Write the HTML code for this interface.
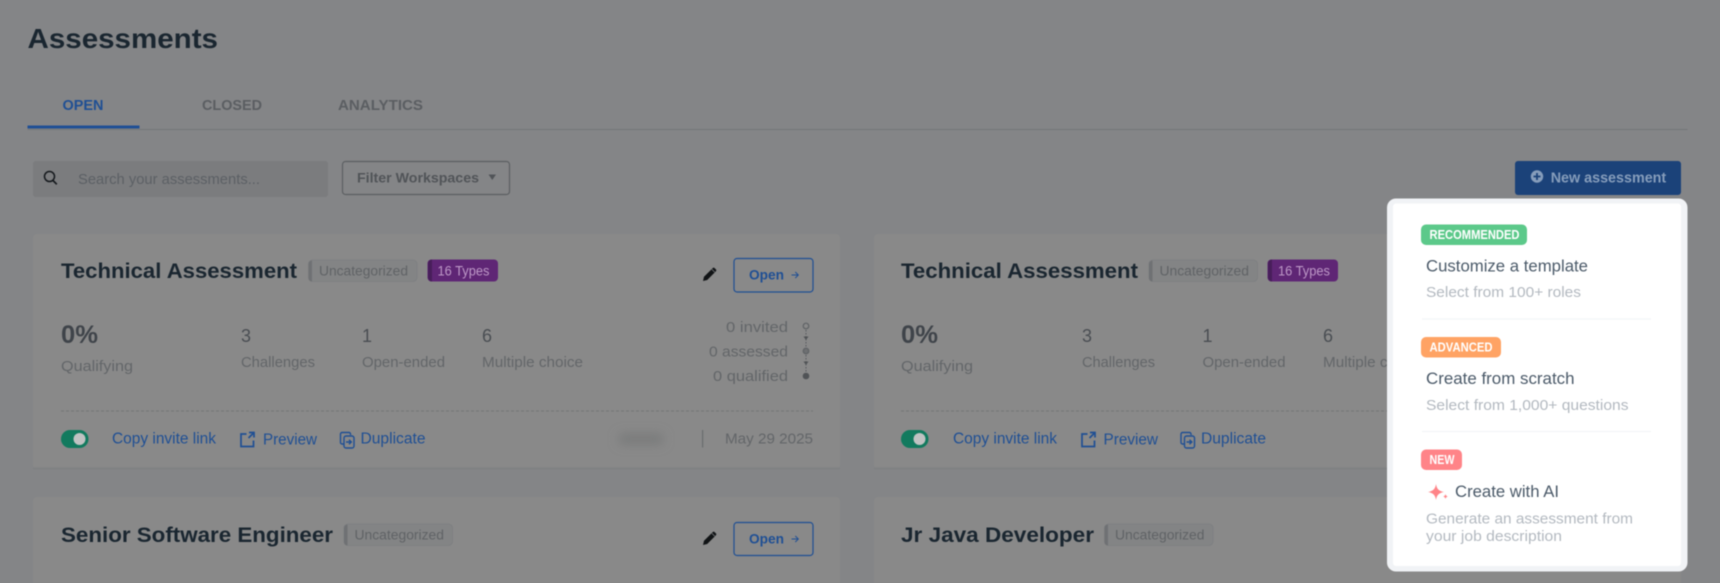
<!DOCTYPE html>
<html lang="en">
<head>
<meta charset="utf-8">
<title>Assessments</title>
<style>
html,body{margin:0;padding:0;width:1720px;height:583px;overflow:hidden;background:#848587}
svg{display:block;filter:blur(.45px)}
text{font-family:"Liberation Sans",sans-serif;white-space:pre}
.b{font-weight:700}
.d{fill:#1a2630}
.lab{fill:#636669;font-size:15px}
.num{fill:#4a4e53;font-size:18px}
.lnk{fill:#1f4f94;font-size:15.500px}
.tag{fill:#606366;font-size:13.500px}
.ty{fill:#bd98c7;font-size:13.500px}
.t1{fill:#4b5a69;font-size:17px}
.t2{fill:#b3b9c0;font-size:15px}
.w{fill:#fff;font-size:12.500px;font-weight:700}
</style>
</head>
<body>
<svg width="1720" height="583" viewBox="0 0 1720 583" xmlns="http://www.w3.org/2000/svg">
<defs>
<filter id="bl" x="-40%" y="-150%" width="180%" height="400%"><feGaussianBlur stdDeviation="5"/></filter>
<g id="ic"><path d="M6.500 2.500H1v12.500h12.500V9M9 1h5v5M13.800 1.200L8.500 6.500" fill="none" stroke="#1f4f94" stroke-width="1.700"/></g>
<g id="dup" fill="none" stroke="#1f4f94" stroke-width="1.400"><path d="M4 13H2.500a1.500 1.500 0 0 1-1.500-1.500V3a1.500 1.500 0 0 1 1.500-1.500H9.500A1.500 1.500 0 0 1 11 3V4"/><rect x="4.500" y="5" width="10" height="12" rx="2"/><path d="M6.500 11h5M9.500 8.800l2.300 2.200-2.300 2.200"/></g>
<g id="pen"><path d="M0 14l1-4.200L9.600 1.200a1.500 1.500 0 0 1 2.100 0l1.100 1.100a1.500 1.500 0 0 1 0 2.100L4.200 13z" fill="#111416"/><path d="M8.800 2.300l3 3" stroke="#848587" stroke-width=".7"/></g>
<g id="arr"><path d="M0 4h6.500M3.800 1l3 3-3 3" fill="none" stroke="#1f4f94" stroke-width="1"/></g>
</defs>

<rect width="1720" height="583" fill="#848587"/>

<text x="27.500" y="48" textLength="190.500" lengthAdjust="spacingAndGlyphs" class="b d" font-size="28">Assessments</text>
<text x="62.500" y="110" textLength="41" lengthAdjust="spacingAndGlyphs" class="b" font-size="14.500" fill="#1f4f94">OPEN</text>
<text x="202" y="110" textLength="60" lengthAdjust="spacingAndGlyphs" class="b" font-size="14.500" fill="#5b5e62">CLOSED</text>
<text x="338" y="110" textLength="85" lengthAdjust="spacingAndGlyphs" class="b" font-size="14.500" fill="#5b5e62">ANALYTICS</text>
<rect x="27.500" y="129" width="1660" height="1" fill="#737578"/>
<rect x="27.500" y="125.500" width="112" height="3" fill="#1f4f94"/>

<rect x="33" y="161" width="295" height="36" rx="3" fill="#7b7c7e"/>
<circle cx="49.500" cy="176.500" r="5" fill="none" stroke="#15191d" stroke-width="1.500"/>
<path d="M53 180.500l3.800 3.800" stroke="#15191d" stroke-width="1.700"/>
<text x="78" y="184" textLength="182" lengthAdjust="spacingAndGlyphs" font-size="14.500" fill="#5c6065">Search your assessments...</text>

<rect x="342.500" y="161.500" width="167" height="33" rx="3" fill="none" stroke="#5c5f62" stroke-width="1.200"/>
<text x="357" y="182.500" textLength="122" lengthAdjust="spacingAndGlyphs" class="b" font-size="14" fill="#515458">Filter Workspaces</text>
<path d="M488.500 174.500h7.500l-3.750 5.500z" fill="#515458"/>

<rect x="1515" y="161" width="166" height="34" rx="3" fill="#1b4279"/>
<circle cx="1537" cy="176.500" r="6.200" fill="#869dbb"/>
<path d="M1537 173v7M1533.500 176.500h7" stroke="#1b4279" stroke-width="1.800"/>
<text x="1550.700" y="182.500" textLength="115.500" lengthAdjust="spacingAndGlyphs" class="b" font-size="14.500" fill="#869dbb">New assessment</text>

<!-- card 1 -->
<rect x="33" y="234" width="807" height="235" rx="4" fill="#898989"/>
<rect x="33" y="467.500" width="807" height="2" rx="1" fill="#7f8183"/>
<rect x="33" y="497" width="807" height="90" rx="4" fill="#898989"/>

<text x="61" y="278" textLength="236" lengthAdjust="spacingAndGlyphs" class="b d" font-size="21">Technical Assessment</text>
<rect x="308.500" y="260" width="108.500" height="21.500" rx="4" fill="#838485" stroke="#7d7f81" stroke-width=".8"/>
<path d="M312 260.500a3.500 3.500 0 0 0-3.500 3.500v14a3.500 3.500 0 0 0 3.500 3.500z" fill="#6f7174"/>
<text x="319" y="275.500" textLength="89" lengthAdjust="spacingAndGlyphs" class="tag">Uncategorized</text>
<rect x="427.500" y="259.500" width="70.500" height="22" rx="4" fill="#5f2675"/>
<path d="M432 259.500a4 4 0 0 0-4 4v14a4 4 0 0 0 4 4z" fill="#481e5b"/>
<text x="437.500" y="275.500" textLength="52" lengthAdjust="spacingAndGlyphs" class="ty">16 Types</text>

<use href="#pen" x="703" y="267"/>
<rect x="734" y="258.500" width="79" height="33.500" rx="3" fill="none" stroke="#1f4f94" stroke-width="1.200"/>
<text x="749" y="279.500" textLength="35" lengthAdjust="spacingAndGlyphs" class="b" font-size="14" fill="#1f4f94">Open</text>
<use href="#arr" x="791.500" y="271"/>

<text x="61" y="343" textLength="37" lengthAdjust="spacingAndGlyphs" class="b" font-size="25" fill="#3f444a">0%</text>
<text x="61" y="371" textLength="72" lengthAdjust="spacingAndGlyphs" class="lab">Qualifying</text>
<text x="241" y="342" class="num">3</text>
<text x="241" y="367" textLength="74" lengthAdjust="spacingAndGlyphs" class="lab">Challenges</text>
<text x="362" y="342" class="num">1</text>
<text x="362" y="367" textLength="83" lengthAdjust="spacingAndGlyphs" class="lab">Open-ended</text>
<text x="482" y="342" class="num">6</text>
<text x="482" y="367" textLength="101" lengthAdjust="spacingAndGlyphs" class="lab">Multiple choice</text>

<text x="726" y="332" textLength="62" lengthAdjust="spacingAndGlyphs" class="lab">0 invited</text>
<text x="709" y="356.500" textLength="79" lengthAdjust="spacingAndGlyphs" class="lab">0 assessed</text>
<text x="713" y="381" textLength="75" lengthAdjust="spacingAndGlyphs" class="lab">0 qualified</text>
<path d="M806 330v18M806 355v18" stroke="#55585c" stroke-width="1" stroke-dasharray="1.500 1.500"/>
<path d="M803.500 336.500h5l-2.500 3.500zM803.500 361.500h5l-2.500 3.500z" fill="#505356"/>
<circle cx="806" cy="326" r="2.800" fill="#898989" stroke="#5f6265" stroke-width="1.200"/>
<circle cx="806" cy="351" r="2.800" fill="#6e7072" stroke="#5f6265" stroke-width="1.200"/>
<circle cx="806" cy="376" r="3.300" fill="#505356"/>

<path d="M61 411H813" stroke="#737577" stroke-width="1" stroke-dasharray="3 2"/>
<rect x="61" y="430" width="27.500" height="18" rx="9" fill="#127a5e"/>
<circle cx="79.500" cy="439" r="6" fill="#c0c2c2"/>
<text x="112" y="443.500" textLength="104" lengthAdjust="spacingAndGlyphs" class="lnk">Copy invite link</text>
<use href="#ic" x="240" y="431.500"/>
<text x="263" y="444.500" textLength="54" lengthAdjust="spacingAndGlyphs" class="lnk">Preview</text>
<use href="#dup" x="339.500" y="431"/>
<text x="360.500" y="443.500" textLength="65" lengthAdjust="spacingAndGlyphs" class="lnk">Duplicate</text>
<rect x="618" y="433" width="46" height="12" rx="6" fill="#7a7b7c" filter="url(#bl)"/>
<rect x="702" y="430" width="1.200" height="17.500" fill="#696c6e"/>
<text x="725" y="443.500" textLength="88" lengthAdjust="spacingAndGlyphs" class="lab">May 29 2025</text>

<text x="61" y="542" textLength="272" lengthAdjust="spacingAndGlyphs" class="b d" font-size="21">Senior Software Engineer</text>
<rect x="344" y="524" width="108.500" height="21.500" rx="4" fill="#838485" stroke="#7d7f81" stroke-width=".8"/>
<path d="M347.500 524.500a3.500 3.500 0 0 0-3.500 3.500v14a3.500 3.500 0 0 0 3.500 3.500z" fill="#6f7174"/>
<text x="354.500" y="539.500" textLength="89.500" lengthAdjust="spacingAndGlyphs" class="tag">Uncategorized</text>
<use href="#pen" x="703" y="531"/>
<rect x="734" y="522.500" width="79" height="33" rx="3" fill="none" stroke="#1f4f94" stroke-width="1.200"/>
<text x="749" y="543.500" textLength="35" lengthAdjust="spacingAndGlyphs" class="b" font-size="14" fill="#1f4f94">Open</text>
<use href="#arr" x="791.500" y="535"/>

<!-- card 2 -->
<rect x="874" y="234" width="807" height="235" rx="4" fill="#898989"/>
<rect x="874" y="467.500" width="807" height="2" rx="1" fill="#7f8183"/>
<rect x="874" y="497" width="807" height="90" rx="4" fill="#898989"/>

<text x="901" y="278" textLength="237" lengthAdjust="spacingAndGlyphs" class="b d" font-size="21">Technical Assessment</text>
<rect x="1149" y="260" width="108.500" height="21.500" rx="4" fill="#838485" stroke="#7d7f81" stroke-width=".8"/>
<path d="M1152.500 260.500a3.500 3.500 0 0 0-3.500 3.500v14a3.500 3.500 0 0 0 3.500 3.500z" fill="#6f7174"/>
<text x="1159.500" y="275.500" textLength="89.500" lengthAdjust="spacingAndGlyphs" class="tag">Uncategorized</text>
<rect x="1267.500" y="259.500" width="70.500" height="22" rx="4" fill="#5f2675"/>
<path d="M1272 259.500a4 4 0 0 0-4 4v14a4 4 0 0 0 4 4z" fill="#481e5b"/>
<text x="1278" y="275.500" textLength="52" lengthAdjust="spacingAndGlyphs" class="ty">16 Types</text>

<text x="901" y="343" textLength="37" lengthAdjust="spacingAndGlyphs" class="b" font-size="25" fill="#3f444a">0%</text>
<text x="901" y="371" textLength="72" lengthAdjust="spacingAndGlyphs" class="lab">Qualifying</text>
<text x="1082" y="342" class="num">3</text>
<text x="1082" y="367" textLength="73" lengthAdjust="spacingAndGlyphs" class="lab">Challenges</text>
<text x="1202.500" y="342" class="num">1</text>
<text x="1202.500" y="367" textLength="83" lengthAdjust="spacingAndGlyphs" class="lab">Open-ended</text>
<text x="1323" y="342" class="num">6</text>
<text x="1323" y="367" textLength="101" lengthAdjust="spacingAndGlyphs" class="lab">Multiple choice</text>

<path d="M901 411H1681" stroke="#737577" stroke-width="1" stroke-dasharray="3 2"/>
<rect x="901" y="430" width="27.500" height="18" rx="9" fill="#127a5e"/>
<circle cx="919.500" cy="439" r="6" fill="#c0c2c2"/>
<text x="953" y="443.500" textLength="104" lengthAdjust="spacingAndGlyphs" class="lnk">Copy invite link</text>
<use href="#ic" x="1081" y="431.500"/>
<text x="1103.500" y="444.500" textLength="54.500" lengthAdjust="spacingAndGlyphs" class="lnk">Preview</text>
<use href="#dup" x="1180" y="431"/>
<text x="1201" y="443.500" textLength="65" lengthAdjust="spacingAndGlyphs" class="lnk">Duplicate</text>

<text x="901" y="542" textLength="193" lengthAdjust="spacingAndGlyphs" class="b d" font-size="21">Jr Java Developer</text>
<rect x="1104.500" y="524" width="108.500" height="21.500" rx="4" fill="#838485" stroke="#7d7f81" stroke-width=".8"/>
<path d="M1108 524.500a3.500 3.500 0 0 0-3.500 3.500v14a3.500 3.500 0 0 0 3.500 3.500z" fill="#6f7174"/>
<text x="1115" y="539.500" textLength="89.500" lengthAdjust="spacingAndGlyphs" class="tag">Uncategorized</text>

<!-- popup -->
<rect x="1387" y="198.500" width="300.500" height="373" rx="9" fill="#f1f3f6"/>
<rect x="1393" y="203.500" width="288" height="362.500" rx="3" fill="#ffffff"/>

<rect x="1421" y="224.500" width="106" height="20.500" rx="5" fill="#5cc98a"/>
<text x="1429.500" y="239" textLength="90" lengthAdjust="spacingAndGlyphs" class="w">RECOMMENDED</text>
<text x="1426" y="271.500" textLength="162" lengthAdjust="spacingAndGlyphs" class="t1">Customize a template</text>
<text x="1426" y="297" textLength="155" lengthAdjust="spacingAndGlyphs" class="t2">Select from 100+ roles</text>
<rect x="1422" y="318.500" width="229" height="1" fill="#f1f3f6"/>

<rect x="1421" y="337" width="80" height="20.500" rx="5" fill="#ffa364"/>
<text x="1429.500" y="351.500" textLength="63" lengthAdjust="spacingAndGlyphs" class="w">ADVANCED</text>
<text x="1426" y="384" textLength="148.500" lengthAdjust="spacingAndGlyphs" class="t1">Create from scratch</text>
<text x="1426" y="410" textLength="202.500" lengthAdjust="spacingAndGlyphs" class="t2">Select from 1,000+ questions</text>
<rect x="1422" y="431" width="229" height="1" fill="#f1f3f6"/>

<rect x="1421" y="449.500" width="41" height="20.500" rx="5" fill="#ff8488"/>
<text x="1429.500" y="464" textLength="25" lengthAdjust="spacingAndGlyphs" class="w">NEW</text>
<path d="M1436 484c.8 5 2.800 7 8 8-5.200 1-7.200 3-8 8-.8-5-2.800-7-8-8 5.200-1 7.200-3 8-8z" fill="#ff8488"/>
<path d="M1445.500 494c.3 1.500.9 2.100 2.300 2.500-1.400.4-2 1-2.300 2.500-.3-1.500-.9-2.100-2.300-2.500 1.400-.4 2-1 2.300-2.500z" fill="#ff8488"/>
<text x="1455" y="497" textLength="104" lengthAdjust="spacingAndGlyphs" class="t1">Create with AI</text>
<text x="1426" y="523.500" textLength="207" lengthAdjust="spacingAndGlyphs" class="t2">Generate an assessment from</text>
<text x="1426" y="541" textLength="136" lengthAdjust="spacingAndGlyphs" class="t2">your job description</text>
</svg>
</body>
</html>
